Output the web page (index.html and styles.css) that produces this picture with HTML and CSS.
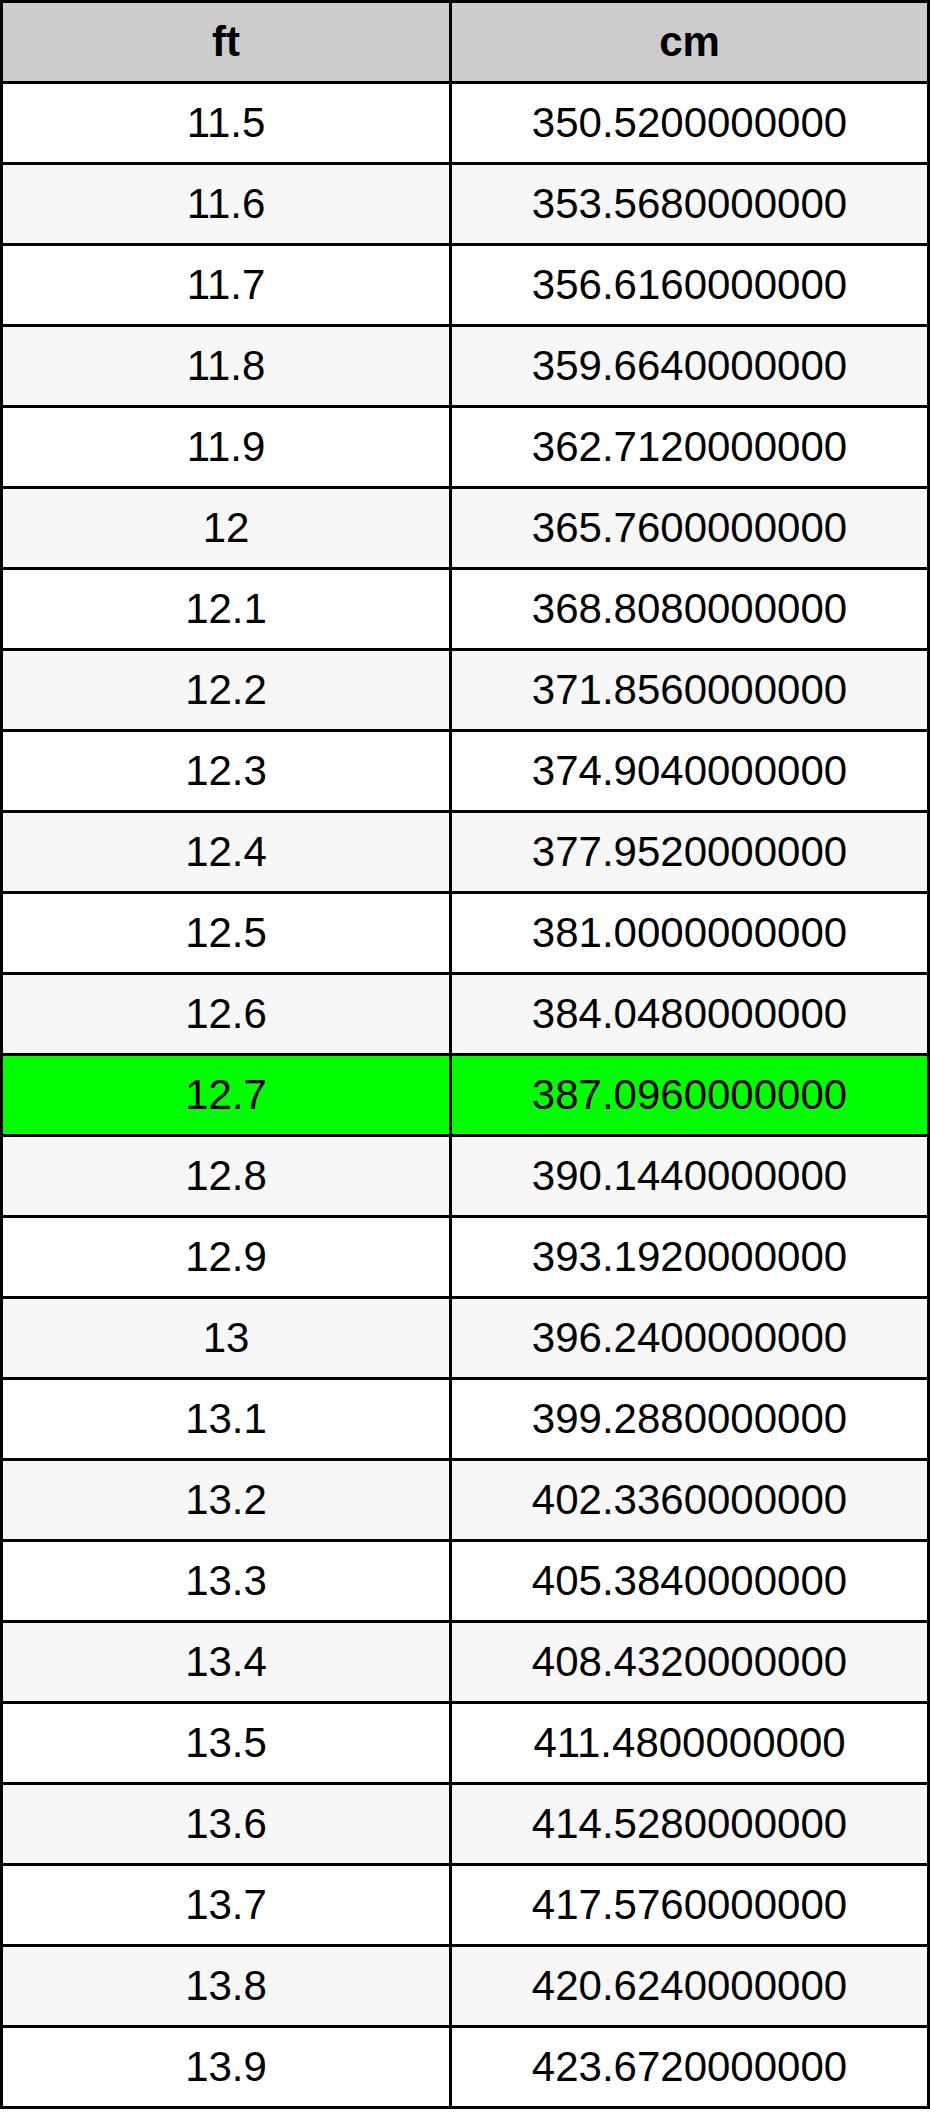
FILE: index.html
```html
<!DOCTYPE html>
<html lang="en">
<head>
<meta charset="utf-8">
<title>ft to cm</title>
<link rel="stylesheet" href="styles.css">
</head>
<body>
<div class="conv">
  <div class="row head"><div class="cell">ft</div><div class="cell">cm</div></div>
  <div class="row"><div class="cell">11.5</div><div class="cell">350.5200000000</div></div>
  <div class="row alt"><div class="cell">11.6</div><div class="cell">353.5680000000</div></div>
  <div class="row"><div class="cell">11.7</div><div class="cell">356.6160000000</div></div>
  <div class="row alt"><div class="cell">11.8</div><div class="cell">359.6640000000</div></div>
  <div class="row"><div class="cell">11.9</div><div class="cell">362.7120000000</div></div>
  <div class="row alt"><div class="cell">12</div><div class="cell">365.7600000000</div></div>
  <div class="row"><div class="cell">12.1</div><div class="cell">368.8080000000</div></div>
  <div class="row alt"><div class="cell">12.2</div><div class="cell">371.8560000000</div></div>
  <div class="row"><div class="cell">12.3</div><div class="cell">374.9040000000</div></div>
  <div class="row alt"><div class="cell">12.4</div><div class="cell">377.9520000000</div></div>
  <div class="row"><div class="cell">12.5</div><div class="cell">381.0000000000</div></div>
  <div class="row alt"><div class="cell">12.6</div><div class="cell">384.0480000000</div></div>
  <div class="row hl"><div class="cell">12.7</div><div class="cell">387.0960000000</div></div>
  <div class="row alt"><div class="cell">12.8</div><div class="cell">390.1440000000</div></div>
  <div class="row"><div class="cell">12.9</div><div class="cell">393.1920000000</div></div>
  <div class="row alt"><div class="cell">13</div><div class="cell">396.2400000000</div></div>
  <div class="row"><div class="cell">13.1</div><div class="cell">399.2880000000</div></div>
  <div class="row alt"><div class="cell">13.2</div><div class="cell">402.3360000000</div></div>
  <div class="row"><div class="cell">13.3</div><div class="cell">405.3840000000</div></div>
  <div class="row alt"><div class="cell">13.4</div><div class="cell">408.4320000000</div></div>
  <div class="row"><div class="cell">13.5</div><div class="cell">411.4800000000</div></div>
  <div class="row alt"><div class="cell">13.6</div><div class="cell">414.5280000000</div></div>
  <div class="row"><div class="cell">13.7</div><div class="cell">417.5760000000</div></div>
  <div class="row alt"><div class="cell">13.8</div><div class="cell">420.6240000000</div></div>
  <div class="row"><div class="cell">13.9</div><div class="cell">423.6720000000</div></div>
</div>
</body>
</html>
```

FILE: styles.css
```css
html, body {
  margin: 0;
  padding: 0;
  background: #ffffff;
}

.conv {
  width: 930px;
  box-sizing: border-box;
  border-top: 3px solid #000;
  border-left: 3px solid #000;
  font-family: "Liberation Sans", Arial, sans-serif;
  font-size: 42px;
  color: #000;
}

.row {
  display: grid;
  grid-template-columns: 449px 478px;
  background: #ffffff;
}

.row.alt {
  background: #f7f7f7;
}

.row.head {
  background: #cccccc;
  font-weight: bold;
}

.row.hl {
  background: #00ff00;
}

.cell {
  box-sizing: border-box;
  height: 81px;
  line-height: 78px;
  text-align: center;
  border-right: 3px solid #000;
  border-bottom: 3px solid #000;
  white-space: nowrap;
}
```
